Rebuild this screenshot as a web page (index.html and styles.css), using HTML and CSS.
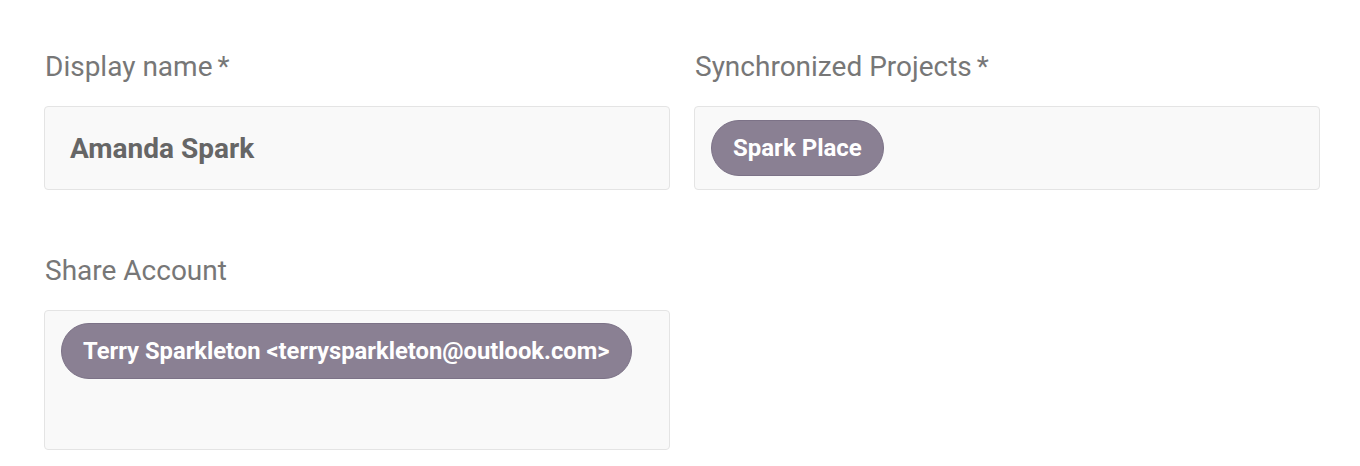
FILE: index.html
```html
<!DOCTYPE html>
<html>
<head>
<meta charset="utf-8">
<link rel="stylesheet" href="styles.css">
</head>
<body>
<div class="form">
  <div class="field">
    <div class="label">Display name<span class="req">*</span></div>
    <div class="input"><span class="value">Amanda Spark</span></div>
  </div>
  <div class="field">
    <div class="label">Synchronized Projects<span class="req">*</span></div>
    <div class="input chips"><span class="chip">Spark Place</span></div>
  </div>
  <div class="field">
    <div class="label">Share Account</div>
    <div class="input chips tall"><span class="chip">Terry Sparkleton &lt;terrysparkleton@outlook.com&gt;</span></div>
  </div>
</div>
</body>
</html>
```
FILE: styles.css
```css
html, body {
  margin: 0;
  background: #ffffff;
  font-family: Roboto, "Liberation Sans", sans-serif;
}
.form {
  display: grid;
  grid-template-columns: 626px 626px;
  column-gap: 24px;
  row-gap: 66px;
  padding: 52px 0 0 44px;
}
.field {
  display: flex;
  flex-direction: column;
  gap: 24px;
}
.label {
  font-size: 28px;
  line-height: 30px;
  color: #777777;
  padding-left: 1px;
}
.req {
  margin-left: 5px;
}
.input {
  box-sizing: border-box;
  height: 84px;
  background: #f9f9f9;
  border: 1.5px solid #e4e4e4;
  border-radius: 4px;
  display: flex;
  align-items: center;
  padding: 0 25px;
}
.value {
  font-size: 28px;
  font-weight: 700;
  color: #666666;
}
.chips {
  padding: 0 16px;
  align-items: center;
}
.tall {
  height: 140px;
  align-items: flex-start;
  padding-top: 12px;
}
.chip {
  box-sizing: border-box;
  height: 56px;
  display: inline-flex;
  align-items: center;
  padding: 0 21px;
  background: #8a8093;
  border: 1px solid #7c7287;
  border-radius: 28px;
  color: #ffffff;
  font-size: 24px;
  font-weight: 700;
}
.tall .chip {
  font-size: 23.75px;
}
```
